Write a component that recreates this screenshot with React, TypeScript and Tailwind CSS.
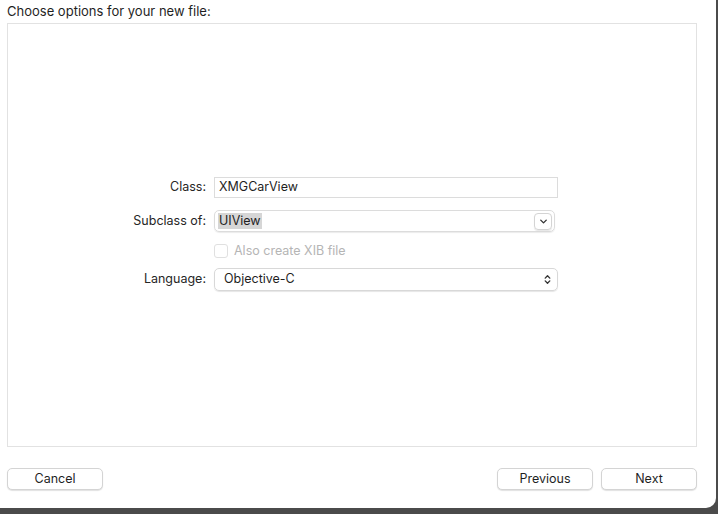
import { ChevronDown, ChevronsUpDown } from "lucide-react";

const font = { fontFamily: "Inter, 'Noto Sans', sans-serif" };

function Label({ children }: { children: React.ReactNode }) {
  return <div className="w-[199px] shrink-0 pr-[1px] text-right text-[12.5px] text-[#262626]">{children}</div>;
}

export default function App() {
  return (
    <div className="h-[514px] w-[718px] bg-[#4b4b4b]" style={font}>
      <div className="flex h-[508px] w-[716px] flex-col rounded-br-[10px] bg-white">
        <div className="px-[7px] pt-[0px] text-[13px] leading-[22px] text-[#1f1f1f]">Choose options for your new file:</div>
        <div className="mx-[7px] mt-[1px] flex h-[424px] w-[690px] flex-col border border-[#e2e2e2] bg-white pt-[153px]">
          {/* Class */}
          <div className="flex h-[21px] items-center">
            <Label>Class:</Label>
            <div className="ml-[7px] flex h-[21px] w-[344px] items-center border border-[#dcdcdc] px-[4px] text-[12.5px] text-[#1f1f1f]">
              XMGCarView
            </div>
          </div>
          {/* Subclass */}
          <div className="mt-[12px] flex h-[22px] items-center">
            <Label>Subclass of:</Label>
            <div className="ml-[7px] flex h-[22px] w-[341px] items-center rounded-[5px] border border-[#dcdcdc] pl-[3px] pr-[2px] shadow-[0_1px_1px_rgba(0,0,0,0.08)]">
              <span className="bg-[#d6d6d6] px-[1px] text-[12.5px] leading-[16px] text-[#1f1f1f]">UIView</span>
              <div className="ml-auto flex h-[17px] w-[18px] items-center justify-center rounded-[4px] border border-[#d4d4d4] shadow-[0_1px_1px_rgba(0,0,0,0.1)]">
                <ChevronDown className="h-[11px] w-[11px] text-[#333]" strokeWidth={3} />
              </div>
            </div>
          </div>
          {/* Checkbox */}
          <div className="mt-[12px] flex h-[14px] items-center">
            <div className="w-[199px] shrink-0" />
            <div className="ml-[7px] h-[14px] w-[14px] rounded-[3px] border border-[#e0e0e0] bg-white" />
            <span className="ml-[6px] text-[12.5px] text-[#b5b5b5]">Also create XIB file</span>
          </div>
          {/* Language */}
          <div className="mt-[10px] flex h-[23px] items-center">
            <Label>Language:</Label>
            <div className="ml-[7px] flex h-[23px] w-[344px] items-center rounded-[5px] border border-[#d8d8d8] pl-[9px] pr-[4px] text-[12.5px] text-[#1f1f1f] shadow-[0_1px_1px_rgba(0,0,0,0.1)]">
              Objective-C
              <ChevronsUpDown className="ml-auto h-[11px] w-[11px] text-[#333]" strokeWidth={3} />
            </div>
          </div>
        </div>
        <div className="mt-[21px] flex px-[7px]">
          <button className="flex h-[22px] w-[96px] items-center justify-center rounded-[5px] border border-[#d4d4d4] bg-white text-[12.5px] text-[#1f1f1f] shadow-[0_1px_1px_rgba(0,0,0,0.12)]">
            Cancel
          </button>
          <div className="flex-1" />
          <button className="flex h-[22px] w-[96px] items-center justify-center rounded-[5px] border border-[#d4d4d4] bg-white text-[12.5px] text-[#1f1f1f] shadow-[0_1px_1px_rgba(0,0,0,0.12)]">
            Previous
          </button>
          <button className="ml-[8px] mr-[12px] flex h-[22px] w-[96px] items-center justify-center rounded-[5px] border border-[#d4d4d4] bg-white text-[12.5px] text-[#1f1f1f] shadow-[0_1px_1px_rgba(0,0,0,0.12)]">
            Next
          </button>
        </div>
      </div>
    </div>
  );
}
